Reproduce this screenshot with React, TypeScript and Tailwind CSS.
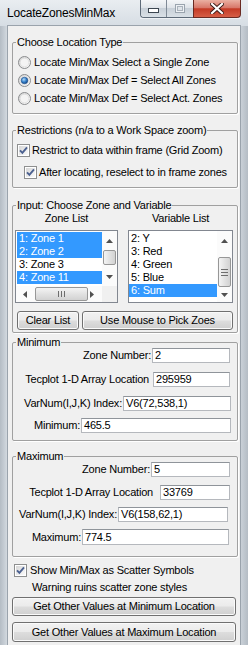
import React from "react";

function Radio({ checked }: { checked?: boolean }) {
  const id = checked ? "rc" : "ru";
  return (
    <svg width="13" height="13" viewBox="0 0 13 13" className="shrink-0">
      <defs>
        <linearGradient id={id + "o"} x1="0" y1="0" x2="1" y2="1">
          <stop offset="0" stopColor="#d0d0d0" />
          <stop offset="1" stopColor="#ffffff" />
        </linearGradient>
        <radialGradient id={id + "d"} cx="0.4" cy="0.35" r="0.7">
          <stop offset="0" stopColor="#b7dcf7" />
          <stop offset="0.5" stopColor="#3a86cf" />
          <stop offset="1" stopColor="#0f3f7d" />
        </radialGradient>
      </defs>
      <circle cx="6.5" cy="6.5" r="6" fill={`url(#${id}o)`} stroke="#8a8c8e" strokeWidth="1" />
      <circle cx="6.5" cy="6.5" r="4.3" fill="#f4f4f4" stroke="#d8d8d8" strokeWidth="0.6" />
      {checked && <circle cx="6.5" cy="6.5" r="3.3" fill={`url(#${id}d)`} stroke="#1b4e8c" strokeWidth="0.6" />}
    </svg>
  );
}

function Check() {
  return (
    <svg width="13" height="13" viewBox="0 0 13 13" className="shrink-0">
      <defs>
        <linearGradient id="cbg" x1="0" y1="0" x2="1" y2="1">
          <stop offset="0" stopColor="#d6d6d6" />
          <stop offset="1" stopColor="#fbfbfb" />
        </linearGradient>
      </defs>
      <rect x="0.5" y="0.5" width="12" height="12" fill="#ffffff" stroke="#8e8f8f" />
      <rect x="2" y="2" width="9" height="9" fill="url(#cbg)" />
      <path d="M3 6.3 L5.4 8.8 L10 3.4" fill="none" stroke="#4c6190" strokeWidth="1.9" />
    </svg>
  );
}

function Btn({ children, className }: { children: React.ReactNode; className: string }) {
  return (
    <div
      className={`flex items-center justify-center rounded-[3px] border border-[#707070] bg-[linear-gradient(#f2f2f2_0%,#ebebeb_48%,#dddddd_52%,#cfcfcf_100%)] shadow-[inset_0_0_0_1px_#fafafa] text-[11px] text-black ${className}`}
    >
      {children}
    </div>
  );
}

function Group({ label, className, children }: { label: string; className: string; children: React.ReactNode }) {
  return (
    <div className={`relative ml-[4px] w-[226px] border border-[#a0a0a0] rounded-[2px] shadow-[1px_1px_0_#ffffff] ${className}`}>
      <span className="absolute left-[3px] top-[-7px] bg-[#f0f0f0] px-[1px] leading-[13px] text-[11px]">{label}</span>
      {children}
    </div>
  );
}

function Input({ value, className }: { value: string; className: string }) {
  return (
    <div className={`h-[15px] shrink-0 flex items-center bg-white border border-[#b5b8bd] border-t-[#8f949a] pl-[2px] text-[11px] leading-[13px] ${className}`}>
      {value}
    </div>
  );
}

function UpArrow() {
  return (
    <svg width="7" height="4" viewBox="0 0 7 4">
      <path d="M0 4 L3.5 0 L7 4 Z" fill="#505050" />
    </svg>
  );
}
function DownArrow() {
  return (
    <svg width="7" height="4" viewBox="0 0 7 4">
      <path d="M0 0 L3.5 4 L7 0 Z" fill="#505050" />
    </svg>
  );
}
function LeftArrow() {
  return (
    <svg width="4" height="7" viewBox="0 0 4 7">
      <path d="M4 0 L0 3.5 L4 7 Z" fill="#505050" />
    </svg>
  );
}
function RightArrow() {
  return (
    <svg width="4" height="7" viewBox="0 0 4 7">
      <path d="M0 0 L4 3.5 L0 7 Z" fill="#505050" />
    </svg>
  );
}

function Item({ text, sel }: { text: string; sel?: boolean }) {
  return (
    <div className={`h-[13px] leading-[13px] pl-[2px] text-[11px] whitespace-nowrap ${sel ? "bg-[#3399ff] text-white" : "text-black"}`}>
      {text}
    </div>
  );
}

export default function App() {
  return (
    <div className="w-[248px] h-[645px] overflow-hidden flex flex-col bg-[linear-gradient(90deg,#b4bcc4_0px,#c9d0d7_5px,#d3d9df_7px,#c9d0d7_241px,#b4bcc4_248px)] font-['Liberation_Sans',Arial,sans-serif] tracking-[-0.2px] text-black">
      {/* Title bar */}
      <div className="h-[26px] shrink-0 flex bg-[linear-gradient(#e9edf1,#d6dde4)]">
        <div className="flex-1 flex items-center pl-[7px] text-[12px] text-black">LocateZonesMinMax</div>
        <div className="flex h-[18px] mr-[7px] shadow-[0_1px_0_#ffffff80]">
          <div className="w-[53px] flex rounded-bl-[4px] border border-t-0 border-r-0 border-[#5d6a78] overflow-hidden">
            <div className="w-[26px] flex items-center justify-center border-r border-[#7f8a96] bg-[linear-gradient(#f4f6f8,#dfe4e9_45%,#c8d0d8_50%,#d9e0e6)]">
              <svg width="11" height="5" viewBox="0 0 11 5" className="mt-[4px]">
                <rect x="0.5" y="0.5" width="10" height="4" fill="#ffffff" stroke="#3c4650" />
              </svg>
            </div>
            <div className="flex-1 flex items-center justify-center bg-[linear-gradient(#f4f6f8,#dfe4e9_45%,#c8d0d8_50%,#d9e0e6)]">
              <svg width="10" height="9" viewBox="0 0 10 9">
                <rect x="0.5" y="0.5" width="9" height="8" fill="#eef1f4" stroke="#9aa4ae" />
                <rect x="2.5" y="2.5" width="5" height="4" fill="#dfe4e9" stroke="#aab3bc" />
              </svg>
            </div>
          </div>
          <div className="w-[48px] flex items-center justify-center rounded-br-[4px] border border-t-0 border-[#6a2a22] bg-[linear-gradient(#eab0a2,#d8786a_45%,#c43a25_52%,#d65e46)]">
            <svg width="14" height="11" viewBox="0 0 14 11">
              <path d="M2 1 L12 10 M12 1 L2 10" stroke="#3a1a16" strokeWidth="4" strokeLinecap="square" />
              <path d="M2 1 L12 10 M12 1 L2 10" stroke="#ffffff" strokeWidth="2.2" strokeLinecap="square" />
            </svg>
          </div>
        </div>
      </div>

      {/* Client area */}
      <div className="ml-[8px] w-[232px] flex-1 flex flex-col bg-[#f0f0f0] pt-[16px] shadow-[0_0_0_1px_#9aa3ac] text-[11px]">
        {/* Choose Location Type */}
        <Group label="Choose Location Type" className="h-[72px] pt-[10px]">
          <div className="flex items-center h-[18px] pl-[5px] gap-[3px]">
            <Radio />
            <span>Locate Min/Max Select a Single Zone</span>
          </div>
          <div className="flex items-center h-[18px] pl-[5px] gap-[3px]">
            <Radio checked />
            <span>Locate Min/Max Def = Select All Zones</span>
          </div>
          <div className="flex items-center h-[18px] pl-[5px] gap-[3px]">
            <Radio />
            <span>Locate Min/Max Def = Select Act. Zones</span>
          </div>
        </Group>

        {/* Restrictions */}
        <Group label="Restrictions (n/a to a Work Space zoom)" className="mt-[16px] h-[58px] pt-[12px]">
          <div className="flex items-center h-[14px] pl-[4px] gap-[2px]">
            <Check />
            <span>Restrict to data within frame (Grid Zoom)</span>
          </div>
          <div className="flex items-center h-[14px] mt-[8px] pl-[11px] gap-[2px]">
            <Check />
            <span>After locating, reselect to in frame zones</span>
          </div>
        </Group>

        {/* Input */}
        <Group label="Input: Choose Zone and Variable" className="mt-[17px] h-[128px] pt-[6px]">
          <div className="flex h-[12px] leading-[12px]">
            <div className="ml-[2px] w-[103px] text-center">Zone List</div>
            <div className="ml-[10px] w-[105px] text-center">Variable List</div>
          </div>
          <div className="flex mt-[6px]">
            {/* Zone list */}
            <div className="ml-[2px] w-[103px] h-[73px] border border-[#828790] bg-white flex flex-col">
              <div className="flex h-[55px]">
                <div className="flex-1 pt-[1px] pl-[1px] overflow-hidden">
                  <Item text="1: Zone 1" sel />
                  <Item text="2: Zone 2" sel />
                  <Item text="3: Zone 3" />
                  <Item text="4: Zone 11" sel />
                </div>
                <div className="w-[15px] flex flex-col bg-[#fbfbfb]">
                  <div className="h-[19px] flex items-center justify-center"><UpArrow /></div>
                  <div className="h-[15px] mx-[1px] rounded-[2px] border border-[#979797] bg-[linear-gradient(90deg,#f4f4f4,#e2e2e2_50%,#d2d2d2)]" />
                  <div className="h-[2px]" />
                  <div className="h-[19px] flex items-center justify-center"><DownArrow /></div>
                </div>
              </div>
              <div className="flex h-[16px] bg-[#fbfbfb]">
                <div className="w-[18px] flex items-center justify-center"><LeftArrow /></div>
                <div className="w-[53px] my-[1px] ml-[1px] rounded-[2px] border border-[#979797] bg-[linear-gradient(#f4f4f4,#e2e2e2_50%,#d2d2d2)] flex items-center justify-center">
                  <svg width="7" height="6" viewBox="0 0 7 6">
                    <path d="M0.5 0 V6 M3.5 0 V6 M6.5 0 V6" stroke="#6d6d6d" strokeWidth="1" />
                  </svg>
                </div>
                <div className="flex-1 flex items-center pl-[2px]"><RightArrow /></div>
                <div className="w-[15px] bg-[#f0f0f0]" />
              </div>
            </div>
            {/* Variable list */}
            <div className="ml-[10px] w-[105px] h-[73px] border border-[#828790] bg-white flex">
              <div className="flex-1 pt-[1px] overflow-hidden">
                <Item text="2: Y" />
                <Item text="3: Red" />
                <Item text="4: Green" />
                <Item text="5: Blue" />
                <Item text="6: Sum" sel />
              </div>
              <div className="w-[15px] flex flex-col bg-[#fbfbfb]">
                <div className="h-[20px] flex items-center justify-center"><UpArrow /></div>
                <div className="h-[6px]" />
                <div className="h-[30px] mx-[1px] rounded-[2px] border border-[#979797] bg-[linear-gradient(90deg,#f4f4f4,#e2e2e2_50%,#d2d2d2)] flex items-center justify-center">
                  <svg width="7" height="7" viewBox="0 0 7 7">
                    <path d="M0 0.5 H7 M0 3.5 H7 M0 6.5 H7" stroke="#6d6d6d" strokeWidth="1" />
                  </svg>
                </div>
                <div className="flex-1 flex items-center justify-center"><DownArrow /></div>
              </div>
            </div>
          </div>
          <div className="flex mt-[8px]">
            <Btn className="ml-[4px] w-[62px] h-[19px]">Clear List</Btn>
            <Btn className="ml-[3px] w-[151px] h-[19px]">Use Mouse to Pick Zoes</Btn>
          </div>
        </Group>

        {/* Minimum */}
        <Group label="Minimum" className="mt-[9px] h-[99px] pt-[5px]">
          <div className="flex items-center justify-end h-[15px] pr-[7px]">
            <span className="mr-[1px]">Zone Number:</span>
            <Input value="2" className="w-[78px]" />
          </div>
          <div className="flex items-center justify-end h-[15px] mt-[9px] pr-[7px]">
            <span className="mr-[4px]">Tecplot 1-D Array Location</span>
            <Input value="295959" className="w-[77px]" />
          </div>
          <div className="flex items-center justify-end h-[15px] mt-[9px] pr-[6px]">
            <span className="mr-[1px]">VarNum(I,J,K) Index:</span>
            <Input value="V6(72,538,1)" className="w-[108px]" />
          </div>
          <div className="flex items-center justify-end h-[15px] mt-[7px] pr-[6px]">
            <span className="mr-[1px]">Minimum:</span>
            <Input value="465.5" className="w-[150px]" />
          </div>
        </Group>

        {/* Maximum */}
        <Group label="Maximum" className="mt-[15px] h-[101px] pt-[5px]">
          <div className="flex items-center justify-end h-[15px] pr-[7px]">
            <span className="mr-[1px]">Zone Number:</span>
            <Input value="5" className="w-[79px]" />
          </div>
          <div className="flex items-center justify-end h-[15px] mt-[8px] pr-[7px]">
            <span className="mr-[7px]">Tecplot 1-D Array Location</span>
            <Input value="33769" className="w-[70px]" />
          </div>
          <div className="flex items-center justify-end h-[15px] mt-[7px] pr-[9px]">
            <span className="mr-[1px]">VarNum(I,J,K) Index:</span>
            <Input value="V6(158,62,1)" className="w-[110px]" />
          </div>
          <div className="flex items-center justify-end h-[16px] mt-[7px] pr-[8px]">
            <span className="mr-[1px]">Maximum:</span>
            <Input value="774.5" className="w-[147px] h-[16px]" />
          </div>
        </Group>

        <div className="flex items-center h-[14px] mt-[6px] pl-[6px] gap-[3px]">
          <Check />
          <span>Show Min/Max as Scatter Symbols</span>
        </div>
        <div className="h-[13px] leading-[13px] mt-[4px] pl-[24px]">Warning ruins scatter zone styles</div>
        <Btn className="mt-[3px] ml-[4px] w-[224px] h-[19px]">Get Other Values at Minimum Location</Btn>
        <Btn className="mt-[6px] ml-[4px] w-[224px] h-[20px]">Get Other Values at Maximum Location</Btn>
      </div>
    </div>
  );
}
